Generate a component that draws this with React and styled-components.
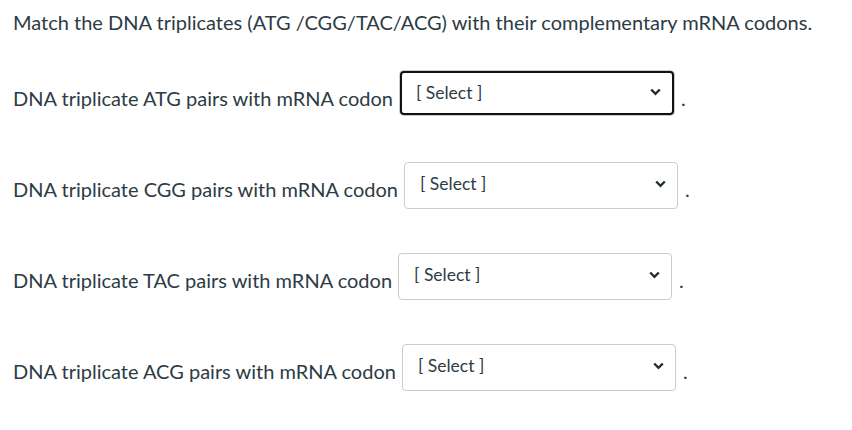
import React from 'react';
import styled, { createGlobalStyle } from 'styled-components';

const GlobalStyle = createGlobalStyle`
  html, body {
    margin: 0;
    background: #ffffff;
  }
  body {
    font-family: Lato, "Open Sans", "Liberation Sans", sans-serif;
    color: #2d3b45;
  }
`;

const Question = styled.div`
  padding: 7px 13px 0;
`;

const Prompt = styled.p`
  margin: 0 0 34px;
  font-size: 20px;
  line-height: 30px;
`;

const Rows = styled.div`
  display: flex;
  flex-direction: column;
  gap: 44px;
`;

const Row = styled.div`
  display: flex;
  align-items: center;
  height: 47px;
  font-size: 20px;
`;

const Label = styled.span`
  margin-top: 7px;
  margin-right: ${p => p.gap}px;
  white-space: nowrap;
`;

const SelectBox = styled.div`
  box-sizing: border-box;
  width: 274px;
  height: ${p => (p.focused ? 44 : 47)}px;
  align-self: flex-start;
  display: flex;
  align-items: center;
  justify-content: space-between;
  padding: 0 11px 2px 15px;
  border: ${p => (p.focused ? '2px solid #111' : '1px solid #c7cdd1')};
  border-radius: 4px;
  box-shadow: ${p => (p.focused ? '0 0 0 1px #c7cdd1' : 'none')};
  background: #fff;
  font-size: 17.5px;
  color: #2d3b45;
`;

const Placeholder = styled.span`
  margin-top: ${p => (p.focused ? 0 : -3)}px;
  margin-left: ${p => (p.focused ? -1 : 0)}px;
`;

const Chevron = styled.svg`
  width: 11px;
  height: 8px;
  margin-top: -1px;
`;

const Period = styled.span`
  margin-top: 7px;
  margin-left: 7px;
`;

const rows = [
  { codon: 'ATG', gap: 7, focused: true },
  { codon: 'CGG', gap: 6 },
  { codon: 'TAC', gap: 6 },
  { codon: 'ACG', gap: 6 },
];

const Dropdown = ({ focused }) => (
  <SelectBox focused={focused}>
    <Placeholder focused={focused}>[ Select ]</Placeholder>
    <Chevron viewBox="0 0 11 8">
      <path d="M1.2 1.5 L5.5 5.8 L9.8 1.5" fill="none" stroke="#1f2d36" strokeWidth="2.4" />
    </Chevron>
  </SelectBox>
);

export default function App() {
  return (
    <>
      <GlobalStyle />
      <Question>
        <Prompt>
          Match the DNA triplicates (ATG /CGG/TAC/ACG) with their complementary mRNA codons.
        </Prompt>
        <Rows>
          {rows.map(r => (
            <Row key={r.codon}>
              <Label gap={r.gap}>DNA triplicate {r.codon} pairs with mRNA codon</Label>
              <Dropdown focused={r.focused} />
              <Period>.</Period>
            </Row>
          ))}
        </Rows>
      </Question>
    </>
  );
}
